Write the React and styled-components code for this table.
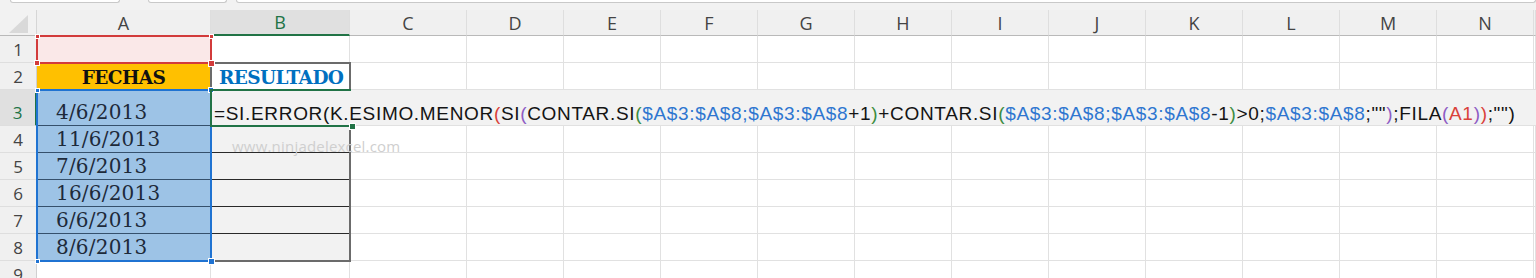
import React from 'react';
import styled, { createGlobalStyle } from 'styled-components';

const GlobalStyle = createGlobalStyle`
  *, *::before, *::after { box-sizing: border-box; }
  body {
    margin: 0;
    background: #ffffff;
    overflow: hidden;
  }
`;

const COLS = 'ABCDEFGHIJKLMNO'.split('');
const ROWS = [1, 2, 3, 4, 5, 6, 7, 8, 9];
const DATES = { 3: '4/6/2013', 4: '11/6/2013', 5: '7/6/2013', 6: '16/6/2013', 7: '6/6/2013', 8: '8/6/2013' };

const GRID = '#e1e1e1';
const GREEN = '#217346';
const BLUE = '#1f73d2';
const RED = '#d23b3b';
const BOX = '#6b6b6b';

const Sheet = styled.div`
  width: 1536px;
  height: 278px;
  overflow: hidden;
  background: #ffffff;
`;

const TopStrip = styled.div`
  height: 10px;
  display: flex;
  align-items: flex-start;
  background: #f2f2f2;
`;

const ToolBox = styled.div`
  height: 3px;
  margin-left: ${(p) => p.$gap}px;
  width: ${(p) => (p.$w ? `${p.$w}px` : 'auto')};
  flex: ${(p) => (p.$w ? 'none' : '1')};
  background: #ffffff;
  border: 1px solid #c9c9c9;
  border-top: none;
  border-radius: 0 0 4px 4px;
`;

const Grid = styled.div`
  display: grid;
  grid-template-columns: 37px 174px 139px 117px repeat(11, 97px) 1fr;
  grid-template-rows: 26px 27px 27px 36px repeat(6, 27px);
`;

const Corner = styled.div`
  grid-row: 1;
  grid-column: 1;
  background: #f2f2f2;
  border-right: 1px solid #d6d6d6;
  border-bottom: 1px solid #b9b9b9;
  display: flex;
  align-items: center;
  justify-content: center;
  padding: 2px 0 0 0;
`;

const ColHead = styled.div`
  grid-row: 1;
  grid-column: ${(p) => p.$c};
  display: flex;
  align-items: flex-end;
  justify-content: center;
  padding-bottom: 3px;
  overflow: hidden;
  background: ${(p) => (p.$active ? '#e0e0e0' : '#f0f0f0')};
  border-right: 1px solid #dedede;
  border-bottom: ${(p) => (p.$active ? `2px solid ${GREEN}` : '1px solid #b9b9b9')};
  color: ${(p) => (p.$active ? GREEN : '#444444')};
  font-family: 'Open Sans', 'Liberation Sans', sans-serif;
  font-size: 18px;
  line-height: 1;
`;

const RowHead = styled.div`
  grid-row: ${(p) => p.$r};
  grid-column: 1;
  display: flex;
  align-items: flex-end;
  justify-content: center;
  padding-bottom: 4px;
  background: ${(p) => (p.$active ? '#e0e0e0' : '#f0f0f0')};
  border-right: ${(p) => (p.$active ? `2px solid ${GREEN}` : '1px solid #d0d0d0')};
  border-bottom: 1px solid #dedede;
  color: ${(p) => (p.$active ? GREEN : '#444444')};
  font-family: 'Open Sans', 'Liberation Sans', sans-serif;
  font-size: 17px;
  line-height: 1;
`;

const Cell = styled.div`
  grid-row: ${(p) => p.$r};
  grid-column: ${(p) => p.$c};
  display: flex;
  align-items: flex-end;
  justify-content: ${(p) => p.$justify || 'flex-start'};
  min-width: 0;
  overflow: hidden;
  white-space: nowrap;
  background: ${(p) => p.$bg || '#ffffff'};
  border-right: 1px solid ${(p) => p.$vline || GRID};
  border-bottom: 1px solid ${(p) => p.$hline || GRID};
`;

const DateText = styled.span`
  padding: 0 0 3px 19px;
  font-family: 'DejaVu Serif', 'Liberation Serif', serif;
  font-size: 20px;
  letter-spacing: 0.2px;
  line-height: 1;
  color: #1d2a3a;
`;

const TitleText = styled.span`
  padding: ${(p) => (p.$center ? '0 0 2px 0' : '0 0 2px 8px')};
  font-family: 'DejaVu Serif', 'Liberation Serif', serif;
  font-weight: 700;
  font-size: 18.5px;
  letter-spacing: -0.6px;
  line-height: 1;
  color: ${(p) => p.$color};
`;

const FormulaCell = styled.div`
  grid-row: 4;
  grid-column: 3 / -1;
  display: flex;
  align-items: flex-end;
  padding: 0 0 2px 3px;
  white-space: nowrap;
  overflow: hidden;
  background: #f2f2f2;
  border-bottom: 1px solid ${GRID};
  font-family: 'Liberation Sans', Arial, sans-serif;
  font-size: 19px;
  letter-spacing: 0.67px;
  line-height: 1;
  color: #141414;
`;

const Tok = styled.span`
  color: ${(p) => p.$color};
`;

const Frame = styled.div`
  grid-row: ${(p) => p.$r};
  grid-column: ${(p) => p.$c};
  position: relative;
  z-index: 2;
  pointer-events: none;
  margin: -1px -1px -1px -1px;
  border: 2px solid ${(p) => p.$color};
  border-right-width: ${(p) => (p.$openRight ? 0 : 2)}px;
`;

const BoxFrame = styled.div`
  grid-row: ${(p) => p.$r};
  grid-column: ${(p) => p.$c};
  z-index: 1;
  pointer-events: none;
  margin: -1px -1px -1px -1px;
  border: 2px solid ${BOX};
  border-left-color: ${(p) => (p.$left ? BOX : 'transparent')};
  border-top-color: ${(p) => (p.$top ? BOX : 'transparent')};
`;

const Handle = styled.span`
  position: absolute;
  width: ${(p) => p.$s}px;
  height: ${(p) => p.$s}px;
  background: ${(p) => p.$color};
  outline: 1px solid #ffffff;
  ${(p) => (p.$top ? `top: ${-(p.$s / 2) - 1}px;` : `bottom: ${-(p.$s / 2) - 1}px;`)}
  ${(p) => (p.$left ? `left: ${-(p.$s / 2) - 1}px;` : `right: ${-(p.$s / 2) - 1}px;`)}
`;

const Watermark = styled.div`
  grid-row: 5 / 7;
  grid-column: 3 / 6;
  z-index: 3;
  align-self: start;
  padding: 10px 0 0 21px;
  font-family: 'Open Sans', 'Liberation Sans', sans-serif;
  font-size: 15px;
  line-height: 20px;
  letter-spacing: 0.2px;
  color: #cfcfcf;
  white-space: nowrap;
  pointer-events: none;
`;

const FORMULA = [
  ['=SI.ERROR(K.ESIMO.MENOR', '#141414'],
  ['(', '#d9413b'],
  ['SI', '#141414'],
  ['(', '#8e5cc4'],
  ['CONTAR.SI', '#141414'],
  ['(', '#3d8c40'],
  ['$A$3:$A$8;$A$3:$A$8', '#2e76d0'],
  ['+1', '#141414'],
  [')', '#3d8c40'],
  ['+CONTAR.SI', '#141414'],
  ['(', '#3d8c40'],
  ['$A$3:$A$8;$A$3:$A$8', '#2e76d0'],
  ['-1', '#141414'],
  [')', '#3d8c40'],
  ['>0;', '#141414'],
  ['$A$3:$A$8', '#2e76d0'],
  [';""', '#141414'],
  [')', '#8e5cc4'],
  [';FILA', '#141414'],
  ['(', '#8e5cc4'],
  ['A1', '#d9413b'],
  [')', '#8e5cc4'],
  [')', '#d9413b'],
  [';"")', '#141414'],
];

function renderCell(row, col, ci) {
  const r = row + 1;
  const c = ci + 2;
  const key = `${col}${row}`;

  if (row === 3 && col !== 'A') return null;

  if (col === 'A' && row === 1) {
    return <Cell key={key} $r={r} $c={c} $bg="#fae8e8" />;
  }
  if (col === 'A' && row === 2) {
    return (
      <Cell key={key} $r={r} $c={c} $bg="#ffc000" $justify="center">
        <TitleText $center $color="#111111">FECHAS</TitleText>
      </Cell>
    );
  }
  if (col === 'B' && row === 2) {
    return (
      <Cell key={key} $r={r} $c={c}>
        <TitleText $color="#0070c0">RESULTADO</TitleText>
      </Cell>
    );
  }
  if (col === 'A' && DATES[row]) {
    return (
      <Cell key={key} $r={r} $c={c} $bg="#9dc3e6" $hline="#35506c" $vline={BLUE}>
        <DateText>{DATES[row]}</DateText>
      </Cell>
    );
  }
  if (col === 'B' && row >= 4 && row <= 8) {
    return <Cell key={key} $r={r} $c={c} $bg="#f2f2f2" $hline="#2a2a2a" />;
  }
  return <Cell key={key} $r={r} $c={c} />;
}

function CornerMark() {
  return (
    <svg width="22" height="20" viewBox="0 0 22 20">
      <polygon points="21,1 21,19 2,19" fill="#d9d9d9" />
    </svg>
  );
}

export default function App() {
  return (
    <>
      <GlobalStyle />
      <Sheet>
        <TopStrip>
          <ToolBox $gap={10} $w={110} />
          <ToolBox $gap={28} $w={79} />
          <ToolBox $gap={9} />
        </TopStrip>
        <Grid>
          <Corner>
            <CornerMark />
          </Corner>
          {COLS.map((col, i) => (
            <ColHead key={col} $c={i + 2} $active={col === 'B'}>
              {col === 'O' ? '' : col}
            </ColHead>
          ))}

          {ROWS.map((row) => (
            <RowHead key={`h${row}`} $r={row + 1} $active={row === 3}>
              {row}
            </RowHead>
          ))}

          {ROWS.map((row) => COLS.map((col, ci) => renderCell(row, col, ci)))}

          <FormulaCell>
            {FORMULA.map(([text, color], i) => (
              <Tok key={i} $color={color}>
                {text}
              </Tok>
            ))}
          </FormulaCell>

          <BoxFrame $r={3} $c={3} $left $top />
          <BoxFrame $r="5 / 10" $c={3} />

          <Frame $r={2} $c={2} $color={RED}>
            <Handle $s={3} $color={RED} $top $left />
            <Handle $s={3} $color={RED} $top />
            <Handle $s={4} $color={RED} $left />
            <Handle $s={5} $color={RED} />
          </Frame>

          <Frame $r="4 / 10" $c={2} $color={BLUE}>
            <Handle $s={3} $color={BLUE} $top $left />
            <Handle $s={4} $color={BLUE} $top />
            <Handle $s={3} $color={BLUE} $left />
            <Handle $s={5} $color={BLUE} />
          </Frame>

          <Frame $r={4} $c={3} $color={GREEN} $openRight>
            <Handle $s={5} $color={GREEN} />
          </Frame>

          <Watermark>www.ninjadelexcel.com</Watermark>
        </Grid>
      </Sheet>
    </>
  );
}
